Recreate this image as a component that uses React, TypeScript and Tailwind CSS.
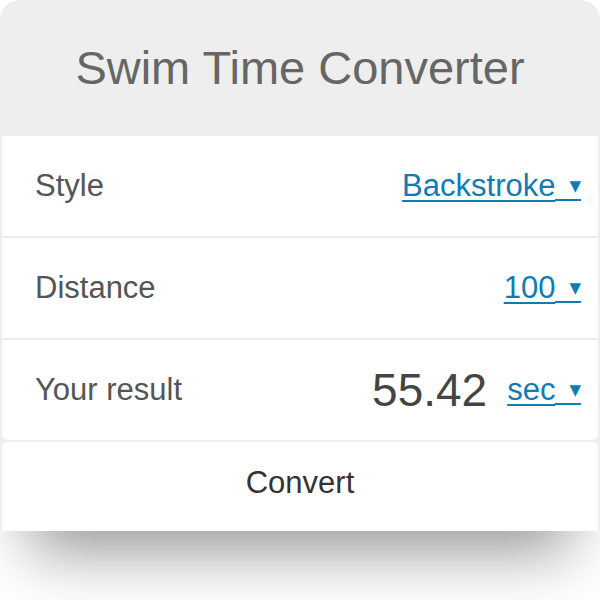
import React from 'react'

const FONT = { fontFamily: '"Liberation Sans", Arial, sans-serif' }

function Select({ value }: { value: string }) {
  return (
    <span className="text-[#0f7db4] cursor-pointer whitespace-nowrap text-[31px]">
      <span className="underline underline-offset-[4px] decoration-[2px]">{value}</span>
      <span className="inline-block relative -top-[5px] leading-none pl-[14px] pb-[5px] border-b-2 border-[#0f7db4] text-[15px] font-['DejaVu_Sans']">▼</span>
    </span>
  )
}

function Row({ label, children, last }: { label: string; children: React.ReactNode; last?: boolean }) {
  return (
    <div className={`shrink-0 flex items-center justify-between bg-white h-[100px] pl-[33px] pr-[17px] ${last ? 'rounded-b-[6px]' : ''}`}>
      <span className="text-[#555] text-[31px]">{label}</span>
      {children}
    </div>
  )
}

export default function App() {
  return (
    <div className="w-[600px] h-[600px] bg-white overflow-hidden" style={FONT}>
      <div className="h-[531px] bg-[#eeeeee] rounded-t-[20px] overflow-hidden shadow-[0_50px_60px_-30px_rgba(0,0,0,0.42)] flex flex-col">
        <div className="shrink-0 h-[136px] flex items-center justify-center">
          <h1 className="text-[47px] text-[#666] leading-none pb-[2px]">Swim Time Converter</h1>
        </div>
        <div className="shrink-0 flex flex-col gap-[2px] px-[2px]">
          <Row label="Style">
            <Select value="Backstroke" />
          </Row>
          <Row label="Distance">
            <Select value="100" />
          </Row>
          <Row label="Your result" last>
            <div className="flex items-center gap-[20px]">
              <span className="text-[46px] text-[#444] leading-none">55.42</span>
              <Select value="sec" />
            </div>
          </Row>
          <div className="shrink-0 bg-white rounded-t-[6px] h-[100px] flex items-center justify-center pb-[18px]">
            <span className="text-[31px] text-[#333]">Convert</span>
          </div>
        </div>
      </div>
    </div>
  )
}
